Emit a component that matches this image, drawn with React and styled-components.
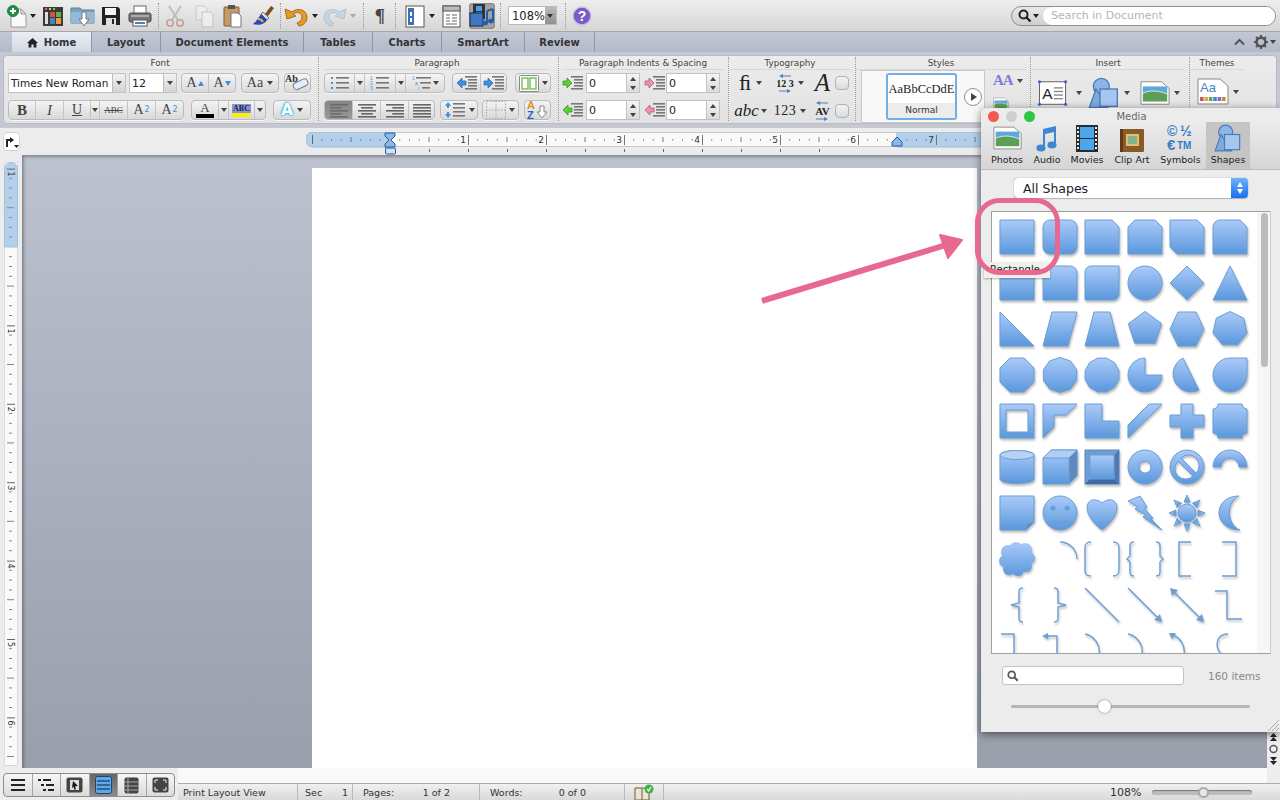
import React from 'react';
import styled, { createGlobalStyle, css } from 'styled-components';

const Global = createGlobalStyle`
  html, body { margin: 0; padding: 0; height: 100%; overflow: hidden; background: #ececec; }
  * { box-sizing: border-box; }
  #root { height: 800px; }
`;
const UI = `"DejaVu Sans", "Liberation Sans", sans-serif`;
const SERIF = `"Liberation Serif", "DejaVu Serif", serif`;

const Page = styled.div`position: relative; width: 1280px; height: 800px; overflow: hidden; display: flex; flex-direction: column; font-family: ${UI}; color: #333;`;

/* top toolbar */
const TopBar = styled.div`height: 32px; flex: none; display: flex; align-items: center; padding-left: 5px; background: linear-gradient(#eeeeee, #d6d6d6); border-bottom: 1px solid #a8a8a8;`;
const Tool = styled.div`width: ${p => p.$w || 26}px; height: 26px; margin-left: ${p => p.$ml || 0}px; flex: none; display: flex; align-items: center; justify-content: center; opacity: ${p => p.$dim ? .5 : 1}; border-radius: 4px; ${p => p.$on && css`background: #a3a3a3; box-shadow: inset 0 0 2px #555;`}`;
const Caret = styled.i`display: block; flex: none; width: 0; height: 0; border-left: ${p => p.$s || 3}px solid transparent; border-right: ${p => p.$s || 3}px solid transparent; border-top: ${p => (p.$s || 3) + 1}px solid ${p => p.$c || '#444'}; margin-left: ${p => p.$ml || 0}px;`;
const Dots = styled.div`width: 1px; height: 26px; flex: none; margin: 0 ${p => p.$m || 7}px; border-left: 1px dotted #999;`;
const Pilcrow = styled.span`font: 700 19px ${SERIF}; color: #444;`;
const ZoomBox = styled.div`display: flex; width: 49px; height: 19px; margin-left: 2px; background: #fff; border: 1px solid #bbb; font-size: 11.5px; align-items: center; padding-left: 3px; justify-content: space-between; color: #222;`;
const ZoomArrow = styled.div`width: 13px; height: 100%; background: linear-gradient(#bbb, #8f8f8f); display: flex; align-items: center; justify-content: center;`;
const SearchPill = styled.div`margin-left: auto; margin-right: 4px; width: 265px; height: 20px; display: flex; align-items: center; border: 1px solid #8f8f8f; border-radius: 10px; background: linear-gradient(#e8e8e8, #cfcfcf); padding-left: 6px;`;
const SearchField = styled.div`flex: 1; height: 18px; margin-left: 4px; background: #fff; border-radius: 9px; color: #b5b5b5; font-size: 11px; line-height: 18px; padding-left: 8px;`;

/* tabs */
const TabsBar = styled.div`height: 20px; flex: none; display: flex; padding-left: 12px; background: linear-gradient(#c3c8d5, #b3b9c8);`;
const Tab = styled.div`width: ${p => p.$w}px; display: flex; align-items: center; justify-content: center; gap: 6px; font-size: 10px; font-weight: 700; color: #333; border-right: 1px solid #8f96a8; ${p => p.$on && css`background: linear-gradient(#e9edf4, #d3d9e4);`}`;
const TabRight = styled.div`margin-left: auto; display: flex; align-items: center; padding-right: 4px; gap: 9px;`;

/* ribbon */
const RibbonWrap = styled.div`height: 75px; flex: none; padding: 3px 3px; background: #c3c8d3;`;
const Ribbon = styled.div`height: 69px; display: flex; padding-left: 1px; background: linear-gradient(#ececec, #e2e2e2); border: 1px solid #b8bcc6; border-radius: 4px;`;
const RGroup = styled.section`width: ${p => p.$w}px; flex: none; padding: 0 ${p => p.$pr || 0}px 0 ${p => p.$pl || 0}px; border-right: ${p => p.$last ? 0 : '1px dotted #999'}; margin: 1px 0 2px;`;
const RTitle = styled.div`height: 13px; line-height: 12px; margin-bottom: 3px; text-align: center; font-size: 8.8px; color: #444; border-bottom: 1px solid #d8d8d8; white-space: nowrap;`;
const RRow = styled.div`display: flex; align-items: flex-start; height: 20px; margin-bottom: 7px;`;
const Field = styled.div`width: ${p => p.$w}px; height: 20px; flex: none; display: flex; background: #fff; border: 1px solid #c2c2c2; margin-left: ${p => p.$ml || 0}px; font-size: ${p => p.$fs || 11}px; color: #222; align-items: center; padding-left: 2px; white-space: nowrap;`;
const FieldArrow = styled.div`width: 13px; height: 100%; margin-left: auto; flex: none; background: linear-gradient(#f2f2f2, #d4d4d4); border-left: 1px solid #bbb; display: flex; align-items: center; justify-content: center;`;
const SegGroup = styled.div`display: flex; height: 20px; flex: none; margin-left: ${p => p.$ml || 0}px; border: 1px solid #bcbcbc; border-radius: 4px; overflow: hidden; background: linear-gradient(#f4f4f4, #d9d9d9); box-shadow: 0 1px 0 #f6f6f6;`;
const Seg = styled.div`width: ${p => p.$w}px; flex: none; display: flex; align-items: center; justify-content: center; gap: 1px; border-right: 1px solid #c4c4c4; font-family: ${SERIF}; color: #444; font-size: 14px; ${p => p.$on && css`background: linear-gradient(#858585, #999);`} &:last-child { border-right: 0; }`;
const Sup = styled.sup`font-size: 8px; color: #3f8fdc; font-family: ${UI}; line-height: 0; vertical-align: super;`;
const Sub = styled.sub`font-size: 8px; color: #3f8fdc; font-family: ${UI}; line-height: 0; vertical-align: sub;`;
const Bold = styled.b`font-size: 15px;`;
const Ital = styled.i`font-size: 15px;`;
const Under = styled.u`font-size: 14px;`;
const Strike = styled.s`font-size: 9px;`;
const GlowA = styled.span`font: 700 15px ${UI}; color: #fff; text-shadow: 0 0 2px #26c1d6, 0 0 2px #26c1d6, 0 0 3px #26c1d6;`;
const ColorA = styled.span`display: flex; flex-direction: column; align-items: center; font-size: 13px; line-height: 12px;`;
const ColorBar = styled.i`display: block; width: ${p => p.$w || 18}px; height: 4px; background: ${p => p.$c};`;
const HiText = styled.span`font: 700 8px ${SERIF}; background: #8c94dc; color: #223; padding: 0 1px; display: block;`;
const Stepper = styled.div`width: 13px; height: 20px; flex: none; display: flex; flex-direction: column; align-items: center; justify-content: space-around; background: linear-gradient(#f5f5f5, #d9d9d9); border: 1px solid #c2c2c2; border-left: 0;`;
const CaretUp = styled(Caret)`transform: rotate(180deg);`;
const IndentIcon = styled.div`width: 24px; flex: none; margin-left: ${p => p.$ml || 0}px; height: 20px; display: flex; align-items: center;`;
const TypoGrid = styled.div`display: grid; grid-template-columns: 39px 40px 25px 14px; row-gap: 8px; padding-left: 2px; align-items: center;`;
const TypoCell = styled.div`height: 20px; display: flex; align-items: center; justify-content: center; gap: 2px; font-family: ${SERIF}; color: #222;`;
const FiText = styled.span`font-size: 22px;`;
const AbcText = styled.span`font-size: 17px; font-style: italic;`;
const OldNum = styled.span`font-size: 14px; letter-spacing: .5px;`;
const TinyNum = styled.span`font-size: 10px; font-weight: 700; line-height: 9px;`;
const ScriptA = styled.span`font-size: 25px; font-style: italic; line-height: 20px;`;
const AvText = styled.span`font-size: 11px; font-weight: 700; line-height: 10px;`;
const StackIcon = styled.div`display: flex; flex-direction: column; align-items: center; gap: 1px;`;
const Check = styled.div`width: 14px; height: 14px; border: 1px solid #a9b2c4; border-radius: 4px; background: linear-gradient(#f2f2f2, #dcdcdc);`;
const StylesRow = styled.div`display: flex; align-items: flex-start; padding-left: 5px;`;
const Gallery = styled.div`width: 124px; height: 53px; margin-top: -3px; flex: none; display: flex; align-items: center; background: #f8f8f8; border: 1px solid #c8c8c8; padding-left: 24px;`;
const StyleCard = styled.div`width: 71px; height: 47px; border: 2px solid #72aee4; border-radius: 3px; background: #fff; display: flex; flex-direction: column;`;
const StylePreview = styled.div`flex: 1; display: flex; align-items: center; justify-content: center; font: 12.5px ${SERIF}; color: #222; white-space: nowrap;`;
const StyleName = styled.div`height: 15px; background: #ececec; text-align: center; font-size: 9px; line-height: 15px; color: #333;`;
const RoundBtn = styled.div`width: 18px; height: 18px; margin-left: 7px; border: 1px solid #8f8f8f; border-radius: 50%; background: #fff; display: flex; align-items: center; justify-content: center;`;
const PlayTri = styled.i`display: block; width: 0; height: 0; border-top: 4px solid transparent; border-bottom: 4px solid transparent; border-left: 6px solid #444; margin-left: 2px;`;
const SideCol = styled.div`display: flex; flex-direction: column; gap: 7px; margin: -1px 0 0 8px;`;
const IconRow = styled.div`display: flex; align-items: center; padding: ${p => p.$t ?? 8}px 0 0 ${p => p.$l ?? 7}px; gap: ${p => p.$g || 0}px;`;
const IconWith = styled.div`display: flex; align-items: center; gap: 4px; width: ${p => p.$w}px; flex: none;`;
const AAText = styled.span`font: 700 15px ${SERIF}; color: #7d7fd8; letter-spacing: -1px;`;

/* ruler */
const RulerRow = styled.div`height: 28px; flex: none; display: flex; align-items: flex-start; background: #ececec; border-top: 1px solid #c9c9c9; padding-top: 4px;`;
const TabStop = styled.div`width: 17px; height: 19px; margin-left: 3px; background: #fff; border: 1px solid #d4d4d4; border-radius: 4px; display: flex; align-items: center; justify-content: center; flex: none;`;
const HRuler = styled.svg`display: block; margin-left: 286px; flex: none; font-family: ${UI};`;

/* main */
const Main = styled.div`flex: 1; min-height: 0; display: flex;`;
const VRulerCol = styled.div`width: 22px; flex: none; background: #ececec; padding: 7px 0 0 4px;`;
const VRuler = styled.svg`display: block; font-family: ${UI};`;
const Canvas = styled.div`flex: 1; padding: 13px 0 0 290px; overflow: hidden; background: linear-gradient(#bdc2ce 0%, #adb3c0 40%, #99a0ac 100%); box-shadow: inset 2px 2px 3px rgba(60,65,80,.45);`;
const Sheet = styled.div`width: 665px; height: 640px; background: #fff;`;
const ScrollCol = styled.div`width: 13px; flex: none; background: #ededed; display: flex; flex-direction: column; align-items: center; justify-content: flex-end; padding-bottom: 2px;`;

/* bottom */
const Bottom = styled.div`height: 32px; flex: none; display: flex;`;
const ViewWrap = styled.div`width: 178px; flex: none; background: #ededed; padding: 5px 0 0 3px;`;
const ViewGroup = styled.div`width: 172px; height: 24px; display: flex; border: 1px solid #8d8d8d; border-radius: 4px; overflow: hidden; background: linear-gradient(#f6f6f6, #dbdbdb);`;
const ViewBtn = styled.div`flex: 1; display: flex; align-items: center; justify-content: center; border-right: 1px solid #a5a5a5; ${p => p.$on && css`background: linear-gradient(#666, #8a8a8a);`} &:last-child { border-right: 0; }`;
const BottomRight = styled.div`flex: 1; display: flex; flex-direction: column;`;
const Strip = styled.div`height: 15px; display: flex; background: #f9f9f9;`;
const StripEnd = styled.div`width: 13px; margin-left: auto; background: #ededed;`;
const Status = styled.div`height: 17px; display: flex; align-items: center; background: linear-gradient(#f0f0f0, #d9d9d9); border-top: 1px solid #aaa; font-size: 9.5px; color: #333;`;
const Cell = styled.div`width: ${p => p.$w}px; height: 100%; flex: none; display: flex; align-items: center; justify-content: ${p => p.$center ? 'center' : 'space-between'}; padding: 0 ${p => p.$pr || 6}px 0 ${p => p.$pl || 6}px; border-right: 1px solid #bbb; white-space: nowrap;`;
const ZoomPct = styled.div`margin-left: 446px; font-size: 11px; width: 42px;`;
const StatusSlider = styled.div`position: relative; width: 100px; height: 5px; border-radius: 3px; background: #bcbcbc; box-shadow: inset 0 1px 1px #777;`;
const StatusThumb = styled.div`position: absolute; left: 46px; top: -3px; width: 11px; height: 11px; border-radius: 50%; background: #e8e8e8; border: 2px solid #aaa;`;

/* media window */
const Win = styled.div`position: absolute; left: 981px; top: 108px; width: 299px; height: 624px; background: #ececec; border-radius: 5px 0 0 0; box-shadow: 0 2px 8px rgba(0,0,0,.55); z-index: 5; display: flex; flex-direction: column;`;
const WinTitle = styled.div`height: 14px; flex: none; position: relative; display: flex; align-items: center; padding: 2px 0 0 7px; gap: 7px;`;
const Light = styled.i`display: block; width: 11px; height: 11px; border-radius: 50%; background: ${p => p.$c};`;
const WinName = styled.span`position: absolute; left: 0; right: 0; padding-left: 2px; text-align: center; font-size: 10px; color: #666;`;
const WinTabs = styled.div`height: 48px; flex: none; display: flex; padding-left: 6px; background: linear-gradient(#ececec, #d5d5d5); border-bottom: 1px solid #bbb;`;
const WinTab = styled.div`width: ${p => p.$w}px; flex: none; margin-left: ${p => p.$ml || 0}px; display: flex; flex-direction: column; align-items: center; justify-content: flex-end; padding-bottom: 4px; font-size: 9.5px; color: #222; gap: 2px; ${p => p.$on && css`background: #c5c5c5;`}`;
const SelectRow = styled.div`height: 41px; flex: none; padding: 8px 0 0 33px;`;
const Select = styled.div`width: 234px; height: 20px; display: flex; align-items: center; background: #fff; border-radius: 4px; box-shadow: 0 0 1px rgba(0,0,0,.6), 0 1px 1px rgba(0,0,0,.2); padding-left: 9px; font-size: 12.5px; color: #222;`;
const SelectBtn = styled.div`width: 17px; height: 100%; margin-left: auto; border-radius: 0 4px 4px 0; background: linear-gradient(#6cb3fa, #1b6ef0); display: flex; flex-direction: column; gap: 2px; align-items: center; justify-content: center;`;
const Pane = styled.div`position: relative; width: 280px; height: 443px; flex: none; margin-left: 10px; background: #fff; border: 1px solid #a0a0a0; border-right-color: #ccc; display: flex; overflow: hidden;`;
const ShapeGrid = styled.div`width: 265px; flex: none; display: grid; grid-template-columns: repeat(6, 36px); column-gap: 6.6px; grid-auto-rows: 36px; row-gap: 10px; padding: 7px 0 0 7px;`;
const ShapeSvg = styled.svg`display: block; overflow: visible; filter: drop-shadow(1px 2px 1px rgba(60,60,60,.35));`;
const PaneTrack = styled.div`flex: 1; background: #f6f6f6; padding: 1px 0 0 4px;`;
const PaneThumb = styled.div`width: 7px; height: 154px; border-radius: 4px; background: #bcbcbc;`;
const Tooltip = styled.div`position: absolute; left: 3px; top: 154px; width: 66px; height: 16px; background: #eef1ea; box-shadow: 0 1px 2px rgba(0,0,0,.3); font-size: 10px; line-height: 15px; padding-left: 6px; color: #222; z-index: 2;`;
const WinFoot = styled.div`flex: 1; padding: 12px 0 0 21px; position: relative;`;
const FootRow = styled.div`display: flex; align-items: center;`;
const FootSearch = styled.div`width: 182px; height: 19px; background: #fff; border: 1px solid #c4c4c4; border-radius: 3px; display: flex; align-items: center; padding-left: 4px;`;
const Count = styled.span`margin-left: 24px; font-size: 10.5px; color: #888;`;
const Slider = styled.div`position: relative; width: 239px; height: 3px; margin: 20px 0 0 9px; border-radius: 2px; background: #b5b5b5;`;
const Thumb = styled.div`position: absolute; left: 87px; top: -5px; width: 13px; height: 13px; border-radius: 50%; background: #fff; box-shadow: 0 0 2px rgba(0,0,0,.6);`;
const Grip = styled.svg`position: absolute; right: 0; bottom: 0;`;
const Overlay = styled.svg`position: absolute; left: 0; top: 0; z-index: 10; pointer-events: none;`;
const Defs = styled.svg`position: absolute; width: 0; height: 0;`;

/* ---------- icons ---------- */
const NewIcon = () => (
  <svg width="25" height="25" viewBox="0 0 25 25">
    <path d="M5 6h10l5 5v13H5z" fill="#fafafa" stroke="#9a9a9a" />
    <path d="M15 6v5h5z" fill="#ddd" stroke="#9a9a9a" />
    <circle cx="7" cy="8" r="5.5" fill="#2b8c3c" stroke="#185" />
    <path d="M4 8h6M7 5v6" stroke="#fff" strokeWidth="2" />
  </svg>
);
const GalleryIcon = () => (
  <svg width="22" height="22" viewBox="0 0 22 22">
    <rect x="1" y="2" width="20" height="19" fill="#3a3a3a" />
    <rect x="3" y="3" width="2" height="2" fill="#e66" /><rect x="7" y="3" width="2" height="2" fill="#ec4" /><rect x="11" y="3" width="2" height="2" fill="#6c6" />
    <rect x="3" y="7" width="3" height="12" fill="#ddd" />
    <rect x="8" y="7" width="5" height="5" fill="#d6523c" /><rect x="14" y="7" width="5" height="5" fill="#5ab04a" />
    <rect x="8" y="13" width="5" height="6" fill="#3f86c8" /><rect x="14" y="13" width="5" height="6" fill="#eb9b3a" />
  </svg>
);
const OpenIcon = () => (
  <svg width="26" height="24" viewBox="0 0 26 24">
    <path d="M1 4h9l2 2h12v13H1z" fill="#7ba4c4" stroke="#56809f" />
    <path d="M1 8h23v11H1z" fill="#94b9d6" />
    <path d="M12 8h4v7h3l-5 7-5-7h3z" fill="#fff" stroke="#777" />
  </svg>
);
const SaveIcon = () => (
  <svg width="20" height="20" viewBox="0 0 20 20">
    <path d="M1 1h16l2 2v16H1z" fill="#222" />
    <rect x="4" y="2" width="11" height="7" fill="#f4f4f4" />
    <rect x="5" y="12" width="10" height="7" fill="#ddd" /><rect x="11" y="13" width="2" height="5" fill="#222" />
  </svg>
);
const PrintIcon = () => (
  <svg width="24" height="22" viewBox="0 0 24 22">
    <rect x="6" y="1" width="12" height="8" fill="#fff" stroke="#666" />
    <rect x="1" y="8" width="22" height="9" rx="2" fill="#777" stroke="#444" />
    <rect x="3" y="10" width="18" height="2" fill="#aaa" />
    <rect x="5" y="15" width="14" height="6" fill="#fff" stroke="#555" />
    <rect x="7" y="17" width="10" height="2" fill="#3f86c8" />
  </svg>
);
const CutIcon = () => (
  <svg width="20" height="24" viewBox="0 0 20 24" fill="none">
    <path d="M4 2l9 14M16 2L7 16" stroke="#999" strokeWidth="2" />
    <circle cx="5" cy="19" r="3.2" stroke="#b2644e" strokeWidth="1.6" />
    <circle cx="15" cy="19" r="3.2" stroke="#b2644e" strokeWidth="1.6" />
  </svg>
);
const CopyIcon = () => (
  <svg width="20" height="24" viewBox="0 0 20 24">
    <path d="M2 2h8l3 3v11H2z" fill="#f2f2f2" stroke="#aaa" />
    <path d="M8 8h8l3 3v12H8z" fill="#fafafa" stroke="#aaa" />
  </svg>
);
const PasteIcon = () => (
  <svg width="20" height="24" viewBox="0 0 20 24">
    <rect x="1" y="3" width="15" height="19" rx="1" fill="#c59a64" stroke="#7a5a30" />
    <rect x="5" y="1" width="7" height="4" fill="#555" />
    <path d="M8 9h7l3 3v11H8z" fill="#fff" stroke="#777" />
  </svg>
);
const BrushIcon = () => (
  <svg width="24" height="24" viewBox="0 0 24 24">
    <path d="M14 10l6-8 3 2-6 8z" fill="#7a4a1d" />
    <path d="M12 8l6 6-2 2-6-6z" fill="#ddd" stroke="#777" />
    <path d="M10 10l6 6c-2 4-8 6-14 4 3-2 5-6 8-10z" fill="#2a47b8" />
    <path d="M7 15c2 0 4 1 5 3" stroke="#e8b93c" strokeWidth="2" fill="none" />
  </svg>
);
const UndoIcon = ({ c = '#e39b2c', s = '#a86c12', flip }) => (
  <svg width="24" height="22" viewBox="0 0 24 22" style={flip ? { transform: 'scaleX(-1)' } : undefined}>
    <path d="M1 4l2 10 9-3-3-2c4-3 9-1 9 3 0 3-2 5-5 6l2 3c6-1 8-5 8-9 0-7-9-10-15-5z" fill={c} stroke={s} />
  </svg>
);
const SidebarIcon = () => (
  <svg width="20" height="24" viewBox="0 0 20 24">
    <rect x="1" y="2" width="18" height="21" fill="#fff" stroke="#555" />
    <rect x="3" y="4" width="6" height="17" fill="#3f6fb5" />
    <rect x="5" y="8" width="2" height="4" fill="#fff" /><rect x="5" y="14" width="2" height="4" fill="#fff" />
  </svg>
);
const ToolboxIcon = () => (
  <svg width="20" height="24" viewBox="0 0 20 24">
    <rect x="1" y="2" width="17" height="21" fill="#fff" stroke="#555" />
    <rect x="1" y="2" width="17" height="5" fill="#bbb" stroke="#555" />
    <path d="M4 11h4M4 14h4M4 17h4M10 11h5M10 14h5M10 17h5M4 20h11" stroke="#666" />
  </svg>
);
const ShapesGlyph = ({ w = 24 }) => (
  <svg width={w} height={w} viewBox="0 0 24 24">
    <circle cx="10" cy="7" r="6" fill="#8fb5e6" stroke="#4a7cb8" />
    <path d="M6 9L1 23h14z" fill="#7fa8dc" stroke="#4a7cb8" />
    <rect x="9" y="9" width="13" height="13" fill="#a6c6ef" stroke="#4a7cb8" />
  </svg>
);
const MediaIcon = () => (
  <svg width="26" height="26" viewBox="0 0 26 26">
    <rect x="4" y="1" width="12" height="15" fill="#333" />
    <rect x="7" y="3" width="6" height="5" fill="#4aa0e6" /><rect x="7" y="9" width="6" height="5" fill="#4aa0e6" />
    <rect x="1" y="10" width="13" height="13" fill="#3f78c4" stroke="#224" />
    <path d="M18 8v11M24 6v11M18 8l6-2" stroke="#1f5fae" strokeWidth="2" fill="none" />
    <ellipse cx="16" cy="20" rx="3" ry="2.3" fill="#1f5fae" /><ellipse cx="22" cy="18" rx="3" ry="2.3" fill="#1f5fae" />
  </svg>
);
const HelpIcon = () => (
  <svg width="20" height="20" viewBox="0 0 20 20">
    <circle cx="10" cy="10" r="9" fill="#7b5cc6" stroke="#c9c2e6" strokeWidth="1.4" />
    <text x="10" y="15" textAnchor="middle" fontFamily="Liberation Sans" fontWeight="700" fontSize="14" fill="#fff">?</text>
  </svg>
);
const Magnifier = ({ s = 14, c = '#222' }) => (
  <svg width={s} height={s} viewBox="0 0 14 14" fill="none"><circle cx="5.5" cy="5.5" r="4" stroke={c} strokeWidth="2" /><path d="M8.5 8.5l4 4" stroke={c} strokeWidth="2.4" /></svg>
);
const HomeIcon = () => (
  <svg width="11" height="11" viewBox="0 0 11 11"><path d="M5.5 1L0 6h1.6v4.5h2.8V7.5h2.2v3h2.8V6H11z" fill="#222" /></svg>
);
const Chevron = () => (
  <svg width="11" height="8" viewBox="0 0 11 8" fill="none"><path d="M1 6.5l4.5-4.5L10 6.5" stroke="#555" strokeWidth="2" /></svg>
);
const Gear = () => (
  <svg width="14" height="14" viewBox="0 0 14 14"><circle cx="7" cy="7" r="4.4" fill="none" stroke="#555" strokeWidth="2.6" /><path d="M7 0v3M7 11v3M0 7h3M11 7h3M2 2l2 2M10 10l2 2M12 2l-2 2M4 10l-2 2" stroke="#555" strokeWidth="2" /></svg>
);
const TriTiny = ({ c, down }) => (
  <svg width="6" height="5" viewBox="0 0 6 5"><path d={down ? 'M0 0h6L3 5z' : 'M0 5h6L3 0z'} fill={c} /></svg>
);
const HArrow = ({ right }) => (
  <svg width="12" height="4" viewBox="0 0 12 4"><path d={right ? 'M0 1.500H8V0L12 2L8 4V2.500H0Z' : 'M12 1.500H4V0L0 2L4 4V2.500H12Z'} fill="#4a7fc9" /></svg>
);
const BentArrow = () => (
  <svg width="14" height="12" viewBox="0 0 14 12"><path d="M2 11V4H6" fill="none" stroke="#222" strokeWidth="2" /><path d="M5 1L9 4L5 7Z" fill="#222" /><path d="M9 9h5l-2.500 3z" fill="#222" /></svg>
);
const Lines = ({ kind = 'left', w = 18, c = '#666' }) => {
  const ys = [2, 5, 8, 11, 14];
  const sh = i => (i % 2 ? 0.65 : 1);
  return (
    <svg width={w} height="16" viewBox={`0 0 ${w} 16`}>
      {ys.map((y, i) => {
        const l = kind === 'just' ? w : w * sh(i);
        const x = kind === 'center' ? (w - l) / 2 : kind === 'right' ? w - l : 0;
        return <rect key={y} x={x} y={y} width={l} height="1.6" fill={c} />;
      })}
    </svg>
  );
};
const BulletIcon = ({ type }) => (
  <svg width="20" height="14" viewBox="0 0 20 14" fontFamily="Liberation Sans" fontSize="5" fill="#3f8fdc">
    {[2, 7, 12].map((y, i) => (
      <g key={y}>
        {type === 'num' ? <text x="0" y={y + 2}>{i + 1}</text> : <rect x="1" y={y - 1} width="2" height="2" fill="#3f8fdc" />}
        <rect x="6" y={y - 1} width="13" height="1.6" fill="#777" />
      </g>
    ))}
  </svg>
);
const MultiIcon = () => (
  <svg width="20" height="16" viewBox="0 0 20 16" fontFamily="Liberation Sans" fontSize="5" fill="#3f8fdc">
    <text x="0" y="5">1</text><text x="3" y="10">a</text><text x="6" y="15">i</text>
    <rect x="4" y="2" width="15" height="1.6" fill="#777" /><rect x="8" y="7" width="11" height="1.6" fill="#777" /><rect x="10" y="12" width="8" height="1.6" fill="#777" />
  </svg>
);
const IndentGlyph = ({ dir, c = '#3f8fdc', s = '#1f68b0' }) => (
  <svg width="22" height="16" viewBox="0 0 22 16">
    <path d={dir === 'l' ? 'M1 8l5-5v3h4v4H6v3z' : 'M10 8L5 3v3H1v4h4v3z'} fill={c} stroke={s} strokeWidth=".7" />
    {[2, 5, 8, 11, 14].map(y => <rect key={y} x={y > 4 && y < 12 ? 12 : 9} y={y - 1} width={y > 4 && y < 12 ? 9 : 12} height="1.6" fill="#777" />)}
  </svg>
);
const ColsIcon = () => (
  <svg width="20" height="17" viewBox="0 0 20 17"><rect x=".5" y=".5" width="19" height="16" rx="1" fill="#fff" stroke="#888" /><rect x="3" y="3" width="6" height="11" fill="#fff" stroke="#7fbf6a" strokeWidth="1.5" /><rect x="11" y="3" width="6" height="11" fill="#fff" stroke="#7fbf6a" strokeWidth="1.5" /></svg>
);
const SpacingIcon = () => (
  <svg width="22" height="18" viewBox="0 0 22 18">
    <path d="M4 1l3 4H5v2H3V5H1zM4 17l3-4H5v-2H3v2H1z" fill="#3f8fdc" />
    {[3, 7, 11, 15].map(y => <rect key={y} x="9" y={y - 1} width="12" height="1.6" fill="#777" />)}
  </svg>
);
const BordersIcon = () => (
  <svg width="20" height="18" viewBox="0 0 20 18" fill="none" stroke="#aaa" strokeDasharray="1.5 1.5"><rect x=".5" y=".5" width="19" height="17" /><path d="M10 0v18M0 9h20" /></svg>
);
const SortIcon = () => (
  <svg width="24" height="20" viewBox="0 0 24 20" fontFamily="Liberation Sans" fontSize="11" fontWeight="700">
    <text x="1" y="9" fill="#d9932b">A</text><text x="1" y="19" fill="#2a63c6">Z</text>
    <path d="M14 6h4v6h3l-5 6-5-6h3z" fill="#fff" stroke="#888" />
  </svg>
);
const Eraser = () => (
  <svg width="25" height="18" viewBox="0 0 25 18" fontFamily="Liberation Serif" fontSize="10" fontWeight="700">
    <text x="0" y="8" fill="#333">Ab</text>
    <rect x="8" y="7" width="15" height="7" rx="3" transform="rotate(-25 15 10)" fill="#e8edf5" stroke="#6a7d9c" />
  </svg>
);
const TextBoxIcon = () => (
  <svg width="32" height="27" viewBox="0 0 32 30" fontFamily="Liberation Sans" fontSize="17" fontWeight="400">
    <rect x="1" y="2" width="29" height="25" fill="#fff" stroke="#555" />
    <text x="4" y="21" fill="#222">A</text>
    {[8, 12, 16, 20].map(y => <rect key={y} x="17" y={y} width="10" height="1.5" fill="#888" />)}
    {[[1, 2], [30, 2], [1, 27], [30, 27]].map(([x, y]) => <circle key={x + '' + y} cx={x} cy={y} r="1.8" fill="#4a5fe0" />)}
  </svg>
);
const PhotoIcon = ({ w = 32, h = 30 }) => (
  <svg width={w} height={h} viewBox="0 0 32 30">
    <path d="M1 3h22l8 7v17H1z" fill="#fff" stroke="#888" />
    <rect x="3" y="8" width="26" height="8" fill="#5ba7de" />
    <path d="M3 16c8-5 14-3 26 0v8H3z" fill="#5e9f57" />
    <path d="M3 15c8-3 16-3 26 1" stroke="#dff0d8" fill="none" />
  </svg>
);
const ThemeIcon = () => (
  <svg width="32" height="30" viewBox="0 0 32 30" fontFamily="Liberation Sans" fontSize="13">
    <path d="M1 2h22l8 7v18H1z" fill="#fff" stroke="#888" />
    <text x="3" y="15" fill="#3f86c8">Aa</text>
    {['#c55', '#da4', '#5a5', '#48c', '#86c', '#c84'].map((c, i) => <rect key={c} x={3 + i * 4.4} y="20" width="3.6" height="4" fill={c} />)}
  </svg>
);
const AudioIcon = () => (
  <svg width="22" height="28" viewBox="0 0 22 28" fill="#3f86d0"><path d="M7 5l13-3v19h-2V8L9 10v14H7z" /><ellipse cx="5" cy="24" rx="4.6" ry="3.4" /><ellipse cx="16" cy="21" rx="4.6" ry="3.4" /></svg>
);
const MovieIcon = () => (
  <svg width="22" height="27" viewBox="0 0 22 27"><rect width="22" height="27" fill="#2b2b2b" /><rect x="4" y="2" width="14" height="11" fill="#4da6ea" /><rect x="4" y="14" width="14" height="11" fill="#4da6ea" />{[2, 6, 10, 14, 18, 22].map(y => <g key={y}><rect x="1" y={y} width="2" height="2" fill="#eee" /><rect x="19" y={y} width="2" height="2" fill="#eee" /></g>)}</svg>
);
const ClipIcon = () => (
  <svg width="24" height="23" viewBox="0 0 24 23"><rect width="24" height="23" rx="1" fill="#8a5a2a" /><rect x="0" width="3" height="23" fill="#5f3a16" /><rect x="6" y="5" width="13" height="12" fill="#e0c070" /><rect x="8" y="7" width="9" height="8" fill="#7fb38a" /></svg>
);
const SymbolIcon = () => (
  <svg width="32" height="28" viewBox="0 0 32 28" fontFamily="Liberation Sans" fontWeight="700" fill="#3a7cc8">
    <text x="2" y="12" fontSize="14">©</text><text x="15" y="12" fontSize="14">½</text><text x="2" y="26" fontSize="15">€</text><text x="12" y="25" fontSize="10">TM</text>
  </svg>
);
const BookIcon = () => (
  <svg width="20" height="17" viewBox="0 0 20 17"><path d="M1 4h14v12H1z" fill="#e8e4d8" stroke="#7a5a30" /><path d="M8 4v12" stroke="#7a5a30" /><circle cx="15" cy="5" r="4.5" fill="#3cb34a" /><path d="M13 5l1.6 2L17 3" stroke="#fff" strokeWidth="1.2" fill="none" /></svg>
);
const ViewIcon = ({ k }) => {
  if (k === 0) return <svg width="14" height="14"><path d="M0 2h14M0 7h14M0 12h14" stroke="#222" strokeWidth="2" /></svg>;
  if (k === 1) return <svg width="16" height="14"><path d="M0 2h3M5 2h8M3 7h3M8 7h8M5 12h3M10 12h6" stroke="#222" strokeWidth="2" /></svg>;
  if (k === 2) return <svg width="17" height="16"><rect x=".5" y=".5" width="16" height="15" rx="2" fill="#444" /><rect x="4" y="3" width="9" height="10" fill="#ddd" /><path d="M7 4l5 5-3 .3 1 3-1.500.5-1-3L6 11z" fill="#111" /></svg>;
  if (k === 3) return <svg width="17" height="18"><rect x=".5" y=".5" width="16" height="17" rx="2" fill="#5ba9ee" stroke="#246" /><path d="M2 5h13M2 9h13M2 13h13" stroke="#123" /></svg>;
  if (k === 4) return <svg width="15" height="17"><rect x=".5" y=".5" width="14" height="16" rx="2" fill="#444" /><path d="M1 5h13M1 9h13M1 13h13M4 1v16" stroke="#aaa" /></svg>;
  return <svg width="17" height="16"><rect x=".5" y=".5" width="16" height="15" rx="2" fill="#444" /><path d="M3 6V3h3M11 3h3v3M14 10v3h-3M6 13H3v-3" stroke="#eee" fill="none" /></svg>;
};

/* ---------- shapes ---------- */
const poly = (n, rot = 0) => Array.from({ length: n }, (_, i) => {
  const a = rot + (i * 2 * Math.PI) / n;
  return `${(18 + 17.5 * Math.sin(a)).toFixed(1)},${(18 - 17.5 * Math.cos(a)).toFixed(1)}`;
}).join(' ');
const F = { fill: 'url(#shapeFill)', stroke: '#6a9fd6', strokeWidth: 1 };
const L = { fill: 'none', stroke: '#6a9fd6', strokeWidth: 1.4 };
const P = d => <path d={d} {...F} fillRule="evenodd" />;
const Li = d => <path d={d} {...L} />;
const HEAD = { fill: '#6a9fd6' };
const sunRays = Array.from({ length: 8 }, (_, i) => (
  <path key={i} d="M15 7L18 0L21 7Z" {...F} transform={`rotate(${i * 45} 18 18)`} />
));
const CLOUD = [[9, 11, 7], [17, 8, 7], [26, 9, 7], [30, 17, 6], [27, 25, 6], [19, 29, 6], [10, 28, 6], [6, 20, 6], [18, 18, 13]];
const SHAPES = [
  P('M1 1H35V35H1Z'),
  P('M8 1H28a7 7 0 0 1 7 7V28a7 7 0 0 1-7 7H8a7 7 0 0 1-7-7V8a7 7 0 0 1 7-7Z'),
  P('M1 1H28L35 8V35H1Z'),
  P('M8 1H28L35 8V35H1V8Z'),
  P('M1 1H28L35 8V35H8L1 28Z'),
  P('M8 1H28L35 8V35H1V8A7 7 0 0 1 8 1Z'),

  P('M1 1H35V35H1Z'),
  P('M1 1H28a7 7 0 0 1 7 7V35H1Z'),
  P('M7 1H35V29a6 6 0 0 1-6 6H1V7a6 6 0 0 1 6-6Z'),
  <circle cx="18" cy="18" r="17" {...F} />,
  P('M18 1L35 18L18 35L1 18Z'),
  P('M18 1L35 35H1Z'),

  P('M1 1L35 35H1Z'),
  P('M10 1H35L26 35H1Z'),
  P('M10 1H26L35 35H1Z'),
  <polygon points={poly(5)} {...F} />,
  P('M9 1H27L35 18L27 35H9L1 18Z'),
  <polygon points={poly(7)} {...F} />,

  P('M11 1H25L35 11V25L25 35H11L1 25V11Z'),
  <polygon points={poly(10)} {...F} />,
  <polygon points={poly(12, Math.PI / 12)} {...F} />,
  P('M18 1A17 17 0 1 0 35 18H18Z'),
  P('M14 1L30 33A17.500 17.500 0 1 1 14 1Z'),
  P('M18 1H35V18A17 17 0 1 1 18 1Z'),

  P('M1 1H35V35H1ZM7 7V29H29V7Z'),
  P('M1 1H35L24 12H12V24L1 35Z'),
  P('M1 1H18V18H35V35H1Z'),
  P('M22 1H35L1 35V22Z'),
  P('M12 1H24V12H35V24H24V35H12V24H1V12H12Z'),
  P('M6 1H30A5 5 0 0 0 35 6V30A5 5 0 0 0 30 35H6A5 5 0 0 0 1 30V6A5 5 0 0 0 6 1Z'),

  <g><path d="M1 6C1 0 35 0 35 6V30C35 36 1 36 1 30Z" {...F} /><ellipse cx="18" cy="6" rx="17" ry="4.500" fill="#b8d2f5" stroke="#6a9fd6" /></g>,
  <g><path d="M1 9L9 1H35V27L27 35H1Z" {...F} /><path d="M1 9L9 1H35L27 9Z" fill="#b0cdf3" stroke="#6a9fd6" /><path d="M27 9L35 1V27L27 35Z" fill="#5f88bf" stroke="#6a9fd6" /></g>,
  <g><rect x="1" y="1" width="34" height="34" fill="#6f9cd4" stroke="#5f88bf" /><path d="M1 35L6 30H30L35 35Z" fill="#3f69a5" /><path d="M35 1L30 6V30L35 35Z" fill="#5079b4" /><rect x="6" y="6" width="24" height="24" fill="url(#shapeFill)" stroke="#6a9fd6" /></g>,
  P('M18 1A17 17 0 1 0 18 35A17 17 0 1 0 18 1ZM18 12A6 6 0 1 1 18 24A6 6 0 1 1 18 12Z'),
  P('M18 1A17 17 0 1 0 18 35A17 17 0 1 0 18 1ZM9 12L24 27A10.500 10.500 0 0 1 9 12ZM12 9A10.500 10.500 0 0 1 27 24Z'),
  P('M1 18A17 17 0 0 1 35 18H27A9 9 0 0 0 9 18Z'),

  <g><path d="M1 1H35V27L27 35H1Z" {...F} /><path d="M27 35L29 29L35 27Z" fill="#5f88bf" /></g>,
  <g><circle cx="18" cy="18" r="17" {...F} /><circle cx="11" cy="13" r="2.500" fill="#6a9fd6" /><circle cx="25" cy="13" r="2.500" fill="#6a9fd6" /><path d="M9 25c5 3 13 3 18 0" fill="none" stroke="#6a9fd6" /></g>,
  P('M18 35C-7 16 4 -3 18 8C32 -3 43 16 18 35Z'),
  P('M1 6L13 1L20 12L17 13L26 23L24 24L35 35L16 22L19 20L8 14L11 12Z'),
  <g>{sunRays}<circle cx="18" cy="18" r="9" {...F} /></g>,
  P('M27 1C14 6 14 29 28 35C14 35 7 26 7 18C7 8 15 1 27 1Z'),

  <g>{CLOUD.map(([cx, cy, r]) => <circle key={cx + '-' + cy} cx={cx} cy={cy} r={r} fill="url(#cloudFill)" />)}</g>,
  Li('M18 1A17 17 0 0 1 35 18'),
  Li('M7 1C2 1 1 3 1 7V29C1 33 2 35 7 35M29 1C34 1 35 3 35 7V29C35 33 34 35 29 35'),
  Li('M7 1C3 1 3 3 3 6V15L0 18L3 21V30C3 33 3 35 7 35M29 1C33 1 33 3 33 6V15L36 18L33 21V30C33 33 33 35 29 35'),
  Li('M22 1H10V35H22'),
  Li('M10 1H24V35H10'),

  Li('M24 1C20 1 20 3 20 6V16L12 18L20 20V30C20 33 20 35 24 35'),
  Li('M12 1C16 1 16 3 16 6V16L24 18L16 20V30C16 33 16 35 12 35'),
  Li('M1 1L35 35'),
  <g><path d="M1 1L33 33" {...L} /><path d="M35 35L27 33L33 27Z" {...HEAD} /></g>,
  <g><path d="M3 3L33 33" {...L} /><path d="M35 35L27 33L33 27Z" {...HEAD} /><path d="M1 1L9 3L3 9Z" {...HEAD} /></g>,
  Li('M3 4H15V32H30'),

  Li('M2 1H15V22'),
  <g><path d="M4 3H15V22" {...L} /><path d="M0 3L6 0V6Z" {...HEAD} /></g>,
  Li('M1 1A18 18 0 0 1 15 22'),
  Li('M1 1A18 18 0 0 1 15 22'),
  <g><path d="M4 2A18 18 0 0 1 15 22" {...L} /><path d="M0 0L7 0L3 6Z" {...HEAD} /></g>,
  Li('M16 1C4 1 2 14 10 22'),
];

const WINDOW_TABS = [
  ['Photos', 40, <PhotoIcon w={29} h={28} />],
  ['Audio', 40, <AudioIcon />],
  ['Movies', 40, <MovieIcon />],
  ['Clip Art', 50, <ClipIcon />],
  ['Symbols', 47, <SymbolIcon />],
];
const TABS = [['Layout', 69], ['Document Elements', 143], ['Tables', 69], ['Charts', 69], ['SmartArt', 83], ['Review', 70]];

const HRulerArt = () => {
  const ticks = [];
  for (let i = -8; i < 61; i++) {
    const x = 84 + i * 9.75;
    if (i % 8 === 0) continue;
    ticks.push(i % 4 === 0 ? <rect key={i} x={x - .5} y="5" width="1" height="5" fill="#777" /> : <rect key={i} x={x - .5} y="7" width="1" height="1.500" fill="#777" />);
  }
  return (
    <HRuler width="680" height="24" viewBox="0 0 680 24">
      <rect x=".5" y=".5" width="678" height="14" rx="7" fill="#fafafa" stroke="#c8c8c8" />
      <path d="M84 0H7A7 7 0 0 0 7 15H84Z" fill="#b3d0ea" stroke="#9bbad8" />
      <path d="M591 0H672A7 7 0 0 1 672 15H591Z" fill="#b3d0ea" stroke="#9bbad8" />
      <rect x="6" y="3" width="1" height="9" fill="#666" />
      {ticks}
      {[1, 2, 3, 4, 5, 6, 7].map(n => (
        <g key={n}>
          <text x={84 + n * 78 - 2} y="11" textAnchor="end" fontSize="9" fill="#333">{n}</text>
          <rect x={84 + n * 78} y="3" width="1" height="10" fill="#777" />
        </g>
      ))}
      {[1, 2, 3, 4, 5, 6, 7, 8, 9, 10, 11].map(n => <rect key={n} x={84 + n * 39} y="17" width="1" height="3" fill="#666" />)}
      <path d="M79 1H89V4L85 8L89 12V15H79V12L83 8L79 4Z" fill="#8cb8e6" stroke="#245a9e" />
      <rect x="79.500" y="16" width="10" height="6" rx="1" fill="#cfe2f6" stroke="#245a9e" />
      <path d="M591 5L596 10V14H586V10Z" fill="#8cb8e6" stroke="#245a9e" />
    </HRuler>
  );
};
const VRulerArt = () => {
  const items = [];
  for (let i = 0; i < 64; i++) {
    const y = 6 + i * 9.8;
    if (i % 8 === 0) continue;
    items.push(<rect key={i} x={i % 4 === 0 ? 3 : 5} y={y} width={i % 4 === 0 ? 7 : 3} height="1" fill="#888" />);
  }
  return (
    <VRuler width="14" height="604" viewBox="0 0 14 604">
      <rect x=".5" y=".5" width="13" height="603" fill="#fafafa" stroke="#dcdcdc" />
      <path d="M.5 85V7A6.500 6.500 0 0 1 13.500 7V85Z" fill="#b3d0ea" stroke="#a3c2de" />
      {items}
      {[-1, 1, 2, 3, 4, 5, 6].map(n => {
        const y = 85 + n * 78.4;
        const label = n < 0 ? 1 : n;
        return (
          <g key={n}>
            <rect x="3" y={y} width="8" height="1" fill="#666" />
            <text x="0" y="0" fontSize="8" fill="#333" textAnchor="start" transform={`translate(4 ${y + 3}) rotate(90)`}>{label}</text>
          </g>
        );
      })}
    </VRuler>
  );
};

export default function App() {
  return (
    <Page>
      <Global />
      <Defs>
        <defs>
          <linearGradient id="shapeFill" x1="0" y1="0" x2="0" y2="1">
            <stop offset="0" stopColor="#abcbf9" />
            <stop offset="1" stopColor="#5a97dc" />
          </linearGradient>
          <linearGradient id="cloudFill" gradientUnits="userSpaceOnUse" x1="0" y1="0" x2="0" y2="36">
            <stop offset="0" stopColor="#abcbf9" />
            <stop offset="1" stopColor="#5a97dc" />
          </linearGradient>
        </defs>
      </Defs>

      <TopBar>
        <Tool><NewIcon /></Tool>
        <Caret $ml={-1} $c="#222" />
        <Tool $ml={3} $w={28}><GalleryIcon /></Tool>
        <Tool $ml={2} $w={28}><OpenIcon /></Tool>
        <Tool $ml={1}><SaveIcon /></Tool>
        <Tool $ml={2} $w={28}><PrintIcon /></Tool>
        <Dots $m={4} />
        <Tool $ml={-1} $dim><CutIcon /></Tool>
        <Tool $ml={3} $dim><CopyIcon /></Tool>
        <Tool $ml={3}><PasteIcon /></Tool>
        <Tool $ml={4}><BrushIcon /></Tool>
        <Dots $m={4} />
        <Tool $ml={-2}><UndoIcon /></Tool>
        <Caret $c="#222" $ml={3} />
        <Tool $ml={4} $dim><UndoIcon c="#a8c8e0" s="#7fa5c4" flip /></Tool>
        <Caret $c="#aaa" $ml={2} />
        <Dots $m={7} />
        <Tool $ml={-4}><Pilcrow>¶</Pilcrow></Tool>
        <Dots $m={2} />
        <Tool $ml={4}><SidebarIcon /></Tool>
        <Caret $c="#222" $ml={1} />
        <Tool $ml={4}><ToolboxIcon /></Tool>
        <Tool $ml={4} $on><MediaIcon /></Tool>
        <Dots $m={5} />
        <ZoomBox>108%<ZoomArrow><Caret $c="#333" /></ZoomArrow></ZoomBox>
        <Dots $m={8} />
        <Tool $ml={-5}><HelpIcon /></Tool>
        <SearchPill>
          <Magnifier /><Caret $c="#222" $ml={1} />
          <SearchField>Search in Document</SearchField>
        </SearchPill>
      </TopBar>

      <TabsBar>
        <Tab $w={80} $on><HomeIcon />Home</Tab>
        {TABS.map(([t, w]) => <Tab key={t} $w={w}>{t}</Tab>)}
        <TabRight><Chevron /><Gear /><Caret $c="#444" $ml={-7} /></TabRight>
      </TabsBar>

      <RibbonWrap>
        <Ribbon>
          <RGroup $w={314} $pl={3} $pr={6}>
            <RTitle>Font</RTitle>
            <RRow>
              <Field $w={118} $fs={10.5}>Times New Roman<FieldArrow><Caret /></FieldArrow></Field>
              <Field $w={48} $ml={3}>12<FieldArrow><Caret /></FieldArrow></Field>
              <SegGroup $ml={4}>
                <Seg $w={27}>A<TriTiny c="#3f8fdc" /></Seg>
                <Seg $w={26}>A<TriTiny c="#3f8fdc" down /></Seg>
              </SegGroup>
              <SegGroup $ml={5}><Seg $w={36}>Aa<Caret $ml={3} /></Seg></SegGroup>
              <SegGroup $ml={5}><Seg $w={25}><Eraser /></Seg></SegGroup>
            </RRow>
            <RRow>
              <SegGroup>
                <Seg $w={27}><Bold>B</Bold></Seg>
                <Seg $w={28}><Ital>I</Ital></Seg>
                <Seg $w={27}><Under>U</Under></Seg>
                <Seg $w={9}><Caret /></Seg>
                <Seg $w={28}><Strike>ABC</Strike></Seg>
                <Seg $w={28}>A<Sup>2</Sup></Seg>
                <Seg $w={27}>A<Sub>2</Sub></Seg>
              </SegGroup>
              <SegGroup $ml={7}>
                <Seg $w={27}><ColorA>A<ColorBar $c="#000" /></ColorA></Seg>
                <Seg $w={10}><Caret /></Seg>
                <Seg $w={26}><ColorA><HiText>ABC</HiText><ColorBar $c="#ffee00" /></ColorA></Seg>
                <Seg $w={10}><Caret /></Seg>
              </SegGroup>
              <SegGroup $ml={7}><Seg $w={36}><GlowA>A</GlowA><Caret $ml={3} /></Seg></SegGroup>
            </RRow>
          </RGroup>

          <RGroup $w={240} $pl={5} $pr={8}>
            <RTitle>Paragraph</RTitle>
            <RRow>
              <SegGroup>
                <Seg $w={30}><BulletIcon /></Seg>
                <Seg $w={10}><Caret /></Seg>
                <Seg $w={31}><BulletIcon type="num" /></Seg>
                <Seg $w={10}><Caret /></Seg>
                <Seg $w={38}><MultiIcon /><Caret /></Seg>
              </SegGroup>
              <SegGroup $ml={7}>
                <Seg $w={28}><IndentGlyph dir="l" /></Seg>
                <Seg $w={25}><IndentGlyph dir="r" /></Seg>
              </SegGroup>
              <SegGroup $ml={8}><Seg $w={34}><ColsIcon /><Caret $ml={2} /></Seg></SegGroup>
            </RRow>
            <RRow>
              <SegGroup>
                <Seg $w={28} $on><Lines kind="left" c="#6d6d6d" /></Seg>
                <Seg $w={28}><Lines kind="center" /></Seg>
                <Seg $w={28}><Lines kind="right" /></Seg>
                <Seg $w={25}><Lines kind="just" /></Seg>
              </SegGroup>
              <SegGroup $ml={5}><Seg $w={36}><SpacingIcon /><Caret $ml={2} /></Seg></SegGroup>
              <SegGroup $ml={4}><Seg $w={35}><BordersIcon /><Caret $ml={2} /></Seg></SegGroup>
              <SegGroup $ml={5}><Seg $w={25}><SortIcon /></Seg></SegGroup>
            </RRow>
          </RGroup>

          <RGroup $w={170} $pl={3} $pr={4}>
            <RTitle>Paragraph Indents &amp; Spacing</RTitle>
            <RRow>
              <IndentIcon><IndentGlyph dir="r" c="#5cd23a" s="#2b8a1c" /></IndentIcon>
              <Field $w={41}>0</Field><Stepper><CaretUp /><Caret /></Stepper>
              <IndentIcon $ml={4}><IndentGlyph dir="r" c="#f08fb8" s="#b04a7a" /></IndentIcon>
              <Field $w={41} $ml={-2}>0</Field><Stepper><CaretUp /><Caret /></Stepper>
            </RRow>
            <RRow>
              <IndentIcon><IndentGlyph dir="l" c="#5cd23a" s="#2b8a1c" /></IndentIcon>
              <Field $w={41}>0</Field><Stepper><CaretUp /><Caret /></Stepper>
              <IndentIcon $ml={4}><IndentGlyph dir="l" c="#f08fb8" s="#b04a7a" /></IndentIcon>
              <Field $w={41} $ml={-2}>0</Field><Stepper><CaretUp /><Caret /></Stepper>
            </RRow>
          </RGroup>

          <RGroup $w={127} $pr={4}>
            <RTitle>Typography</RTitle>
            <TypoGrid>
              <TypoCell><FiText>ﬁ</FiText><Caret $ml={3} /></TypoCell>
              <TypoCell><StackIcon><HArrow /><TinyNum>12 3</TinyNum><HArrow right /></StackIcon><Caret $ml={2} /></TypoCell>
              <TypoCell><ScriptA>A</ScriptA></TypoCell>
              <Check />
              <TypoCell><AbcText>abc</AbcText><Caret /></TypoCell>
              <TypoCell><OldNum>123</OldNum><Caret $ml={2} /></TypoCell>
              <TypoCell><StackIcon><HArrow /><AvText>AV</AvText><HArrow right /></StackIcon></TypoCell>
              <Check />
            </TypoGrid>
          </RGroup>

          <RGroup $w={175} $pr={4}>
            <RTitle>Styles</RTitle>
            <StylesRow>
              <Gallery>
                <StyleCard>
                  <StylePreview>AaBbCcDdE</StylePreview>
                  <StyleName>Normal</StyleName>
                </StyleCard>
                <RoundBtn><PlayTri /></RoundBtn>
              </Gallery>
              <SideCol>
                <IconWith $w={32}><AAText>AA</AAText><Caret /></IconWith>
                <IconWith $w={32}><PhotoIcon w={16} h={16} /></IconWith>
              </SideCol>
            </StylesRow>
          </RGroup>

          <RGroup $w={159} $pr={4}>
            <RTitle>Insert</RTitle>
            <IconRow $t={4} $l={6}>
              <IconWith $w={51}><TextBoxIcon /><Caret $ml={3} /></IconWith>
              <IconWith $w={52}><ShapesGlyph w={32} /><Caret /></IconWith>
              <IconWith $w={40}><PhotoIcon /><Caret /></IconWith>
            </IconRow>
          </RGroup>

          <RGroup $w={54} $last>
            <RTitle>Themes</RTitle>
            <IconRow $t={4} $l={7}><IconWith $w={44}><ThemeIcon /><Caret /></IconWith></IconRow>
          </RGroup>
        </Ribbon>
      </RibbonWrap>

      <RulerRow>
        <TabStop><BentArrow /></TabStop>
        <HRulerArt />
      </RulerRow>

      <Main>
        <VRulerCol><VRulerArt /></VRulerCol>
        <Canvas><Sheet /></Canvas>
        <ScrollCol>
          <svg width="11" height="34" viewBox="0 0 11 34">
            <path d="M2 5l3.500-4 3.500 4zM2 9l3.500-4 3.500 4z" fill="#222" />
            <circle cx="5.500" cy="17" r="3.500" fill="none" stroke="#555" strokeWidth="1.400" />
            <path d="M2 25l3.500 4 3.500-4zM2 29l3.500 4 3.500-4z" fill="#222" />
          </svg>
        </ScrollCol>
      </Main>

      <Bottom>
        <ViewWrap>
          <ViewGroup>
            {[0, 1, 2, 3, 4, 5].map(k => <ViewBtn key={k} $on={k === 3}><ViewIcon k={k} /></ViewBtn>)}
          </ViewGroup>
        </ViewWrap>
        <BottomRight>
          <Strip><StripEnd /></Strip>
          <Status>
            <Cell $w={120} $pl={5}>Print Layout View</Cell>
            <Cell $w={55} $pl={7} $pr={4}><span>Sec</span><span>1</span></Cell>
            <Cell $w={127} $pl={10} $pr={29}><span>Pages:</span><span>1 of 2</span></Cell>
            <Cell $w={145} $pl={10} $pr={38}><span>Words:</span><span>0 of 0</span></Cell>
            <Cell $w={39} $center><BookIcon /></Cell>
            <ZoomPct>108%</ZoomPct>
            <StatusSlider><StatusThumb /></StatusSlider>
          </Status>
        </BottomRight>
      </Bottom>

      <Win>
        <WinTitle>
          <Light $c="#f4574f" /><Light $c="#cfcfcf" /><Light $c="#2ec840" />
          <WinName>Media</WinName>
        </WinTitle>
        <WinTabs>
          {WINDOW_TABS.map(([t, w, icon]) => <WinTab key={t} $w={w}>{icon}{t}</WinTab>)}
          <WinTab $w={44} $ml={2} $on><ShapesGlyph w={28} />Shapes</WinTab>
        </WinTabs>
        <SelectRow>
          <Select>All Shapes
            <SelectBtn><TriTiny c="#fff" /><TriTiny c="#fff" down /></SelectBtn>
          </Select>
        </SelectRow>
        <Pane>
          <ShapeGrid>
            {SHAPES.map((s, i) => <ShapeSvg key={i} width="36" height="36" viewBox="0 0 36 36">{s}</ShapeSvg>)}
          </ShapeGrid>
          <PaneTrack><PaneThumb /></PaneTrack>
        </Pane>
        <Tooltip>Rectangle</Tooltip>
        <WinFoot>
          <FootRow>
            <FootSearch><Magnifier s={12} c="#555" /></FootSearch>
            <Count>160 items</Count>
          </FootRow>
          <Slider><Thumb /></Slider>
          <Grip width="14" height="14" viewBox="0 0 14 14"><path d="M13 2L2 13M13 6L6 13M13 10L10 13" stroke="#aaa" /></Grip>
        </WinFoot>
      </Win>

      <Overlay width="1280" height="800" viewBox="0 0 1280 800">
        <rect x="977.500" y="200.500" width="80" height="72" rx="22" fill="none" stroke="#e8698f" strokeWidth="5" />
        <path d="M762 301L946 245" stroke="#e8698f" strokeWidth="6" />
        <path d="M962 240L940 235L948 258Z" fill="#e8698f" stroke="#e8698f" strokeLinejoin="round" strokeWidth="2" />
      </Overlay>
    </Page>
  );
}
